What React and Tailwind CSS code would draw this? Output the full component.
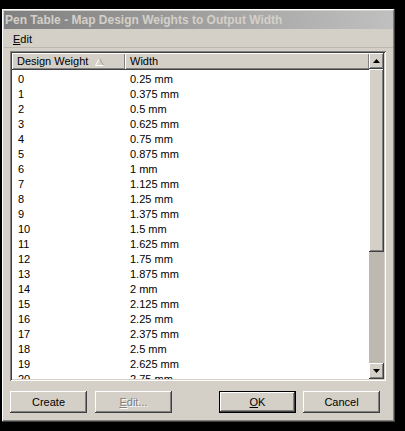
import React from 'react';

const fmt = (n) => `${parseFloat((0.25 + n * 0.125).toFixed(3))} mm`;

const raised =
  'shadow-[inset_-1px_-1px_#404040,inset_1px_1px_#ffffff,inset_-2px_-2px_#808080,inset_2px_2px_#d4d0c8]';

const Arrow = ({ down }) => (
  <svg width="7" height="4" viewBox="0 0 7 4" className="block">
    {down ? (
      <polygon points="0,0 7,0 3.5,4" fill="#000" />
    ) : (
      <polygon points="3.5,0 7,4 0,4" fill="#000" />
    )}
  </svg>
);

const SortMark = () => (
  <svg width="9" height="8" viewBox="0 0 9 8" className="ml-[7px] mt-[1px]">
    <line x1="4.5" y1="0.5" x2="0.5" y2="7.5" stroke="#ffffff" strokeWidth="1" />
    <line x1="4.5" y1="0.5" x2="8.5" y2="7.5" stroke="#a09c94" strokeWidth="1" />
    <line x1="0.5" y1="7.5" x2="8.5" y2="7.5" stroke="#ffffff" strokeWidth="1" />
  </svg>
);

const Button = ({ children, isDefault, disabled }) => (
  <div
    className={`w-[77px] h-[22px] flex items-center justify-center bg-[#d4d0c8] ${
      isDefault
        ? 'border border-black shadow-[inset_-1px_-1px_#404040,inset_1px_1px_#ffffff,inset_-2px_-2px_#808080]'
        : raised
    } ${disabled ? 'text-[#808080] [text-shadow:1px_1px_#ffffff]' : 'text-black'}`}
  >
    {children}
  </div>
);

export default function App() {
  const rows = Array.from({ length: 21 }, (_, i) => i);

  return (
    <div
      className="w-[405px] h-[431px] bg-black pt-[9px] pl-[2px] text-[11px] overflow-hidden"
      style={{ fontFamily: '"Liberation Sans", Arial, sans-serif' }}
    >
      <div className={`w-[393px] h-[413px] bg-[#d4d0c8] p-[2px] flex flex-col ${raised}`}>
        {/* Title bar (inactive) */}
        <div className="h-[18px] shrink-0 bg-gradient-to-r from-[#808080] to-[#c0c0c0] pl-[1px] flex items-center">
          <span className="font-bold text-[#d4d0c8] text-[12px]">
            Pen Table - Map Design Weights to Output Width
          </span>
        </div>

        {/* Menu */}
        <div className="h-[19px] shrink-0 pl-[9px] pt-[4px] leading-[13px] border-b border-[#bcb8b0]">
          <span>
            <span className="underline underline-offset-[1px]">E</span>dit
          </span>
        </div>

        {/* List view */}
        <div className="ml-[6px] mt-[3px] w-[376px] h-[330px] shrink-0 bg-white flex shadow-[inset_1px_1px_#808080,inset_-1px_-1px_#ffffff,inset_2px_2px_#404040,inset_-2px_-2px_#d4d0c8] p-[2px]">
          <div className="flex-1 flex flex-col overflow-hidden">
            {/* Header */}
            <div className="h-[17px] shrink-0 flex border-b border-[#404040]">
              <div className="w-[113px] flex items-center pl-[5px] bg-[#d4d0c8] shadow-[inset_1px_1px_#ffffff,inset_-1px_-1px_#808080]">
                <span>Design Weight</span>
                <SortMark />
              </div>
              <div className="flex-1 flex items-center pl-[5px] bg-[#d4d0c8] shadow-[inset_1px_1px_#ffffff,inset_-1px_-1px_#808080]">
                <span>Width</span>
              </div>
            </div>
            {/* Rows */}
            <div className="flex-1 overflow-hidden pt-[2px]">
              {rows.map((i) => (
                <div key={i} className="flex h-[15px] leading-[15px]">
                  <div className="w-[113px] pl-[6px]">{i}</div>
                  <div className="flex-1 pl-[5px]">{fmt(i)}</div>
                </div>
              ))}
            </div>
          </div>

          {/* Scrollbar */}
          <div className="w-[15px] shrink-0 flex flex-col bg-[#bdb9b1]">
            <div className={`h-[16px] shrink-0 bg-[#d4d0c8] flex items-center justify-center ${raised}`}>
              <Arrow />
            </div>
            <div className={`h-[183px] shrink-0 bg-[#d4d0c8] ${raised}`} />
            <div className="flex-1" />
            <div className={`h-[16px] shrink-0 bg-[#d4d0c8] flex items-center justify-center ${raised}`}>
              <Arrow down />
            </div>
          </div>
        </div>

        {/* Buttons */}
        <div className="ml-[6px] mt-[10px] flex">
          <Button>Create</Button>
          <div className="ml-[8px]">
            <Button disabled>
              <span>
                <span className="underline underline-offset-[1px]">E</span>dit...
              </span>
            </Button>
          </div>
          <div className="ml-[47px]">
            <Button isDefault>
              <span>
                <span className="underline underline-offset-[1px]">O</span>K
              </span>
            </Button>
          </div>
          <div className="ml-[7px]">
            <Button>Cancel</Button>
          </div>
        </div>
      </div>
    </div>
  );
}
